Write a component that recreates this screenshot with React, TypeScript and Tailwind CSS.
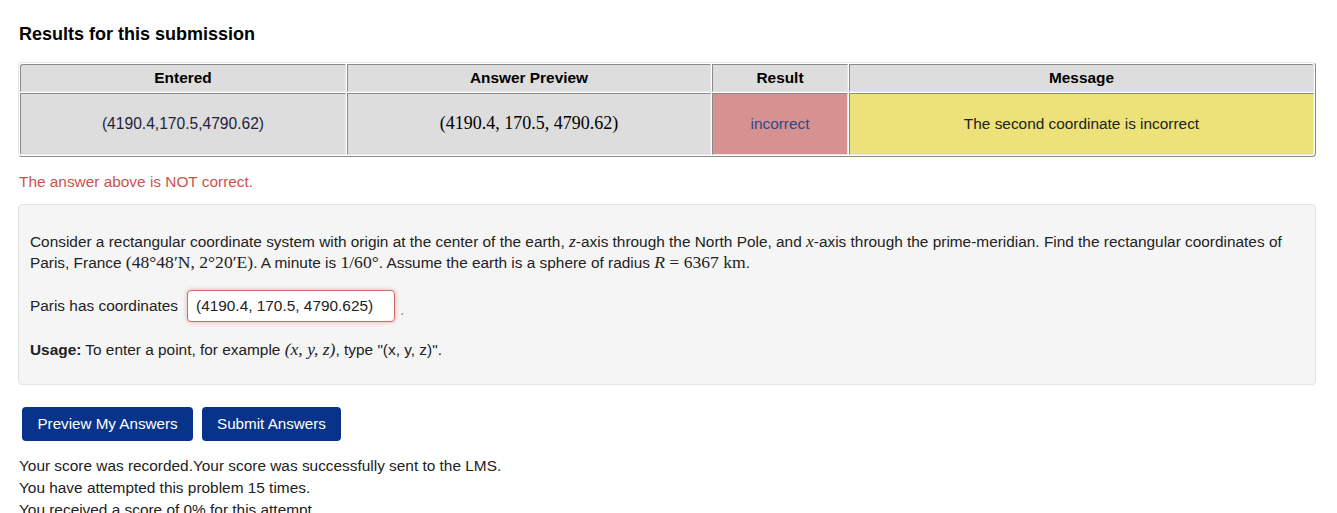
import React from "react";

const sans = "font-['Liberation_Sans',Arial,sans-serif]";
const serif = "font-['Liberation_Serif','Times_New_Roman',serif]";

function M({ children, italic, size = "text-[17.6px]" }: { children: React.ReactNode; italic?: boolean; size?: string }) {
  return <span className={`${serif} ${size} leading-none ${italic ? "italic" : ""}`}>{children}</span>;
}

const cell =
  "border border-solid border-t-[#8a8a8a] border-l-[#8a8a8a] border-b-[#e6e6e6] border-r-[#e6e6e6] text-center";

export default function App() {
  return (
    <div className={`${sans} text-[15.4px] text-[#222] bg-white min-h-[513px] pl-[18px] pr-[21px] pt-[24px]`}>
      <h3 className="text-[18px] font-bold text-black leading-[20px] ml-px">Results for this submission</h3>

      <table className="mt-[18px] w-full table-fixed border-separate border-spacing-[1px] border border-solid border-t-[#e6e6e6] border-l-[#e6e6e6] border-b-[#8a8a8a] border-r-[#8a8a8a] rounded-[4px]">
        <colgroup>
          <col className="w-[326px]" />
          <col className="w-[364px]" />
          <col className="w-[136px]" />
          <col />
        </colgroup>
        <thead>
          <tr className="h-[28px]">
            <th className={`${cell} bg-[#dddddd] font-bold text-black rounded-tl-[3px]`}>Entered</th>
            <th className={`${cell} bg-[#dddddd] font-bold text-black`}>Answer Preview</th>
            <th className={`${cell} bg-[#dddddd] font-bold text-black`}>Result</th>
            <th className={`${cell} bg-[#dddddd] font-bold text-black rounded-tr-[3px]`}>Message</th>
          </tr>
        </thead>
        <tbody>
          <tr className="h-[62px]">
            <td className={`${cell} bg-[#dddddd] text-[#1f2340] text-[15.6px] rounded-bl-[3px]`}>(4190.4,170.5,4790.62)</td>
            <td className={`${cell} bg-[#dddddd] text-black`}>
              <M size="text-[18px]">(4190.4, 170.5, 4790.62)</M>
            </td>
            <td className={`${cell} bg-[#d69191] text-[#2b4a8c]`}>incorrect</td>
            <td className={`${cell} bg-[#ede17a] text-[#222] rounded-br-[3px]`}>The second coordinate is incorrect</td>
          </tr>
        </tbody>
      </table>

      <p className="mt-[15px] ml-px text-[#c9534f] leading-[20px]">The answer above is NOT correct.</p>

      <div className="mt-[12px] bg-[#f5f5f5] border border-[#e3e3e3] rounded-[4px] px-[11px] pt-[26px] pb-[24px]">
        <p className="leading-[21px]">
          Consider a rectangular coordinate system with origin at the center of the earth, <M italic>z</M>-axis through the
          North Pole, and <M italic>x</M>-axis through the prime-meridian. Find the rectangular coordinates of Paris, France{" "}
          <M>(48°48′N, 2°20′E)</M>. A minute is <M>1/60°</M>. Assume the earth is a sphere of radius{" "}
          <M>
            <i>R</i> = 6367 km
          </M>
          .
        </p>
        <div className="mt-[17px] flex items-center h-[32px]">
          <span>Paris has coordinates</span>
          <div className="ml-[9px] w-[208px] h-[32px] bg-white border border-[#d26a66] rounded-[4px] shadow-[0_0_4px_rgba(201,83,79,0.45)] flex items-center px-[8px]">
            (4190.4, 170.5, 4790.625)
          </div>
          <span className="ml-[5px] mt-[8px] text-[#888]">.</span>
        </div>
        <p className="mt-[17px] leading-[21px]">
          <b>Usage:</b> To enter a point, for example <M italic>(x, y, z)</M>, type "(x, y, z)".
        </p>
      </div>

      <div className="mt-[22px] ml-[4px] flex gap-[9px]">
        <button className="h-[34px] w-[171px] rounded-[4px] bg-[#08338a] text-white text-[15.2px]">Preview My Answers</button>
        <button className="h-[34px] w-[139px] rounded-[4px] bg-[#08338a] text-white text-[15.2px]">Submit Answers</button>
      </div>

      <div className="mt-[14px] ml-px leading-[22px] text-[#222]">
        <p>Your score was recorded.Your score was successfully sent to the LMS.</p>
        <p>You have attempted this problem 15 times.</p>
        <p>You received a score of 0% for this attempt.</p>
      </div>
    </div>
  );
}
